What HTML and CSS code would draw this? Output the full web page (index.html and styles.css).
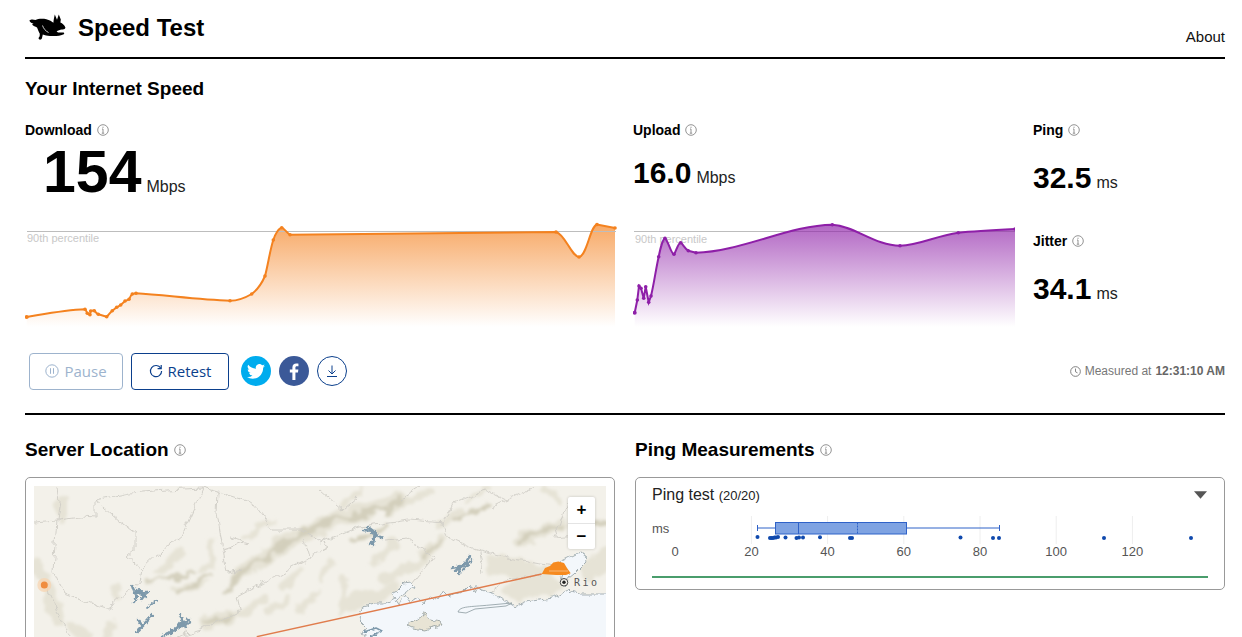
FILE: index.html
```html
<!DOCTYPE html>
<html lang="en">
<head>
<meta charset="utf-8">
<title>Speed Test</title>
<link rel="stylesheet" href="styles.css">
</head>
<body>
<svg class="defs" width="0" height="0" aria-hidden="true">
  <defs>
    <symbol id="info" viewBox="0 0 12 12">
      <circle cx="6" cy="6" r="5.300" fill="none" stroke="#888" stroke-width=".9"/>
      <path d="M6 2.700v1.200M6 5v4.200M5 5h1M4.800 9.200h2.400" fill="none" stroke="#888" stroke-width=".9"/>
    </symbol>
    <linearGradient id="gradOrange" x1="0" y1="0" x2="0" y2="1">
      <stop offset="0" stop-color="#f4811f" stop-opacity=".68"/>
      <stop offset="1" stop-color="#f4811f" stop-opacity="0"/>
    </linearGradient>
    <linearGradient id="gradPurple" x1="0" y1="0" x2="0" y2="1">
      <stop offset="0" stop-color="#8e1fa8" stop-opacity=".68"/>
      <stop offset="1" stop-color="#8e1fa8" stop-opacity="0"/>
    </linearGradient>
    <filter id="terrain" filterUnits="userSpaceOnUse" x="20" y="470" width="600" height="180">
      <feTurbulence type="fractalNoise" baseFrequency=".07" numOctaves="3" seed="4" result="n"/>
      <feDisplacementMap in="SourceGraphic" in2="n" scale="16" xChannelSelector="R" yChannelSelector="G"/>
      <feGaussianBlur stdDeviation="1.500"/>
    </filter>
    <filter id="wiggle" filterUnits="userSpaceOnUse" x="20" y="470" width="600" height="180">
      <feTurbulence type="fractalNoise" baseFrequency=".09" numOctaves="3" seed="9" result="n"/>
      <feDisplacementMap in="SourceGraphic" in2="n" scale="9" xChannelSelector="R" yChannelSelector="G"/>
    </filter>
    <filter id="coast" filterUnits="userSpaceOnUse" x="20" y="470" width="620" height="190">
      <feTurbulence type="fractalNoise" baseFrequency=".14" numOctaves="3" seed="2" result="n"/>
      <feDisplacementMap in="SourceGraphic" in2="n" scale="6" xChannelSelector="R" yChannelSelector="G"/>
    </filter>
    <filter id="jag" filterUnits="userSpaceOnUse" x="20" y="470" width="600" height="180">
      <feTurbulence type="fractalNoise" baseFrequency=".4" numOctaves="2" seed="5" result="n"/>
      <feDisplacementMap in="SourceGraphic" in2="n" scale="4" xChannelSelector="R" yChannelSelector="G"/>
    </filter>
  </defs>
</svg>
<div class="page">
  <header class="top">
    <div class="brand">
      <svg class="rabbit" width="38" height="28" viewBox="29 14 38 28">
        <path fill="#000" d="M29.300 20.600 C30.500 19.200 33 19 35.500 20 C38.500 18.200 46 18 50.500 20.800 L53.400 22.800 C53.600 20 54.200 17 54.800 14.600 L57 19.800 L58.800 14.400 L60.800 19.500 L60.400 22.600 C62.500 23.400 64.500 25.200 65.400 27.500 C65.300 29 63.800 29.800 61.800 29.400 C60 29.800 58 30.500 56.600 31.200 L58 32.600 L63.800 32.400 L64.300 34 C60.500 36 55 36.200 51 36 C48 36.200 45 35.600 42.800 34.600 L42 38 C41.600 40 39 40.200 38.600 38.600 C38.400 37.600 39.400 37.200 39.700 36 L39.800 33.800 C38.800 31.500 37.600 29 37 27.400 C35.200 26.400 33.400 26.200 32 24.400 L33.500 23.800 C32 23.600 30 22.400 29.300 20.600 Z"/>
        <path fill="none" stroke="#fff" stroke-width=".8" d="M42.500 25.500 C43.500 28.500 45.500 31 48.500 32.500"/>
      </svg>
      <h1 class="brand-name">Speed Test</h1>
    </div>
    <a class="about">About</a>
  </header>

  <section class="speed">
    <h2 class="section-title">Your Internet Speed</h2>
    <div class="results">
      <div class="metric-col">
        <div class="label">Download <svg class="info"><use href="#info"/></svg></div>
        <div class="value value-big">154<span class="unit">Mbps</span></div>
        <svg class="chart" width="592" height="115" viewBox="25 215 592 115">
          <path fill="url(#gradOrange)" d="M26.700 317 C45 314 65 310 85 309.300 C86 310 86.500 312 87.300 313.300 C88 314 89 315 90 314.700 C90.300 313 90.300 312 90.700 311 C92 310.500 93 310.300 94.300 310.700 C95.500 312 97 313.800 98.300 314.300 C101 315 104 316 106.700 316.700 C108.500 315 110.500 312 112.300 310.700 L116.700 307.300 L120.700 305 L125 301 L129 299.300 C130 297 131 295 132.300 294 L136 293.300 C165 295 200 300 230 300.700 C238 300.700 245 298 251.700 294 C257 290 262 283 265 276 C268 265 270 250 273.300 240 C275 234 279 228 281.700 227.700 C284 228 287 233 290 234.700 C380 233.500 470 232.500 556 232 C565 234 571 256 579 257 C587 256 590 226 597 224.500 L615 228 V327 H26.700 Z"/>
          <line class="p90" x1="27" y1="231.500" x2="616" y2="231.500"/>
          <text class="p90-text" x="27" y="242">90th percentile</text>
          <path fill="none" stroke="#f4821f" stroke-width="2" d="M26.700 317 C45 314 65 310 85 309.300 C86 310 86.500 312 87.300 313.300 C88 314 89 315 90 314.700 C90.300 313 90.300 312 90.700 311 C92 310.500 93 310.300 94.300 310.700 C95.500 312 97 313.800 98.300 314.300 C101 315 104 316 106.700 316.700 C108.500 315 110.500 312 112.300 310.700 L116.700 307.300 L120.700 305 L125 301 L129 299.300 C130 297 131 295 132.300 294 L136 293.300 C165 295 200 300 230 300.700 C238 300.700 245 298 251.700 294 C257 290 262 283 265 276 C268 265 270 250 273.300 240 C275 234 279 228 281.700 227.700 C284 228 287 233 290 234.700 C380 233.500 470 232.500 556 232 C565 234 571 256 579 257 C587 256 590 226 597 224.500 L615 228"/>
          <g fill="#f4821f">
            <circle cx="26.700" cy="317" r="2"/><circle cx="85" cy="309.300" r="1.800"/><circle cx="87.300" cy="313.300" r="1.800"/><circle cx="90" cy="314.700" r="1.800"/><circle cx="90.700" cy="311" r="1.800"/><circle cx="94.300" cy="310.700" r="1.800"/><circle cx="98.300" cy="314.300" r="1.800"/><circle cx="106.700" cy="316.700" r="1.800"/><circle cx="112.300" cy="310.700" r="1.800"/><circle cx="116.700" cy="307.300" r="1.800"/><circle cx="120.700" cy="305" r="1.800"/><circle cx="125" cy="301" r="1.800"/><circle cx="129" cy="299.300" r="1.800"/><circle cx="132.300" cy="294" r="1.800"/><circle cx="136" cy="293.300" r="1.800"/><circle cx="230" cy="300.700" r="1.800"/><circle cx="251.700" cy="294" r="1.800"/><circle cx="265" cy="276" r="1.800"/><circle cx="273.300" cy="240" r="1.800"/><circle cx="281.700" cy="227.700" r="1.800"/><circle cx="290" cy="234.700" r="1.800"/><circle cx="556" cy="232" r="1.800"/><circle cx="579" cy="257" r="1.800"/><circle cx="597" cy="224.500" r="1.800"/><circle cx="615" cy="228" r="1.800"/>
          </g>
        </svg>
      </div>
      <div class="metric-col">
        <div class="label">Upload <svg class="info"><use href="#info"/></svg></div>
        <div class="value value-mid">16.0<span class="unit">Mbps</span></div>
        <svg class="chart" width="382" height="115" viewBox="633 215 382 115">
          <line class="p90" x1="634" y1="231.500" x2="1015" y2="231.500"/>
          <text class="p90-text" x="635" y="243">90th percentile</text>
          <path fill="url(#gradPurple)" d="M634.700 312.700 L637.300 300 L639 286 L641 288.300 L643.700 298.300 L645.700 286.700 L648.700 302.300 L651 296 C654 284 656 268 658.700 256.700 C660 250 663 238.300 665 238.300 C668 240 671 254.300 674 254.300 C676 252 678 242.700 680.700 242.700 C683 244 685 249 688.300 250.700 L696 252.700 C740 252 790 225 832.300 224.700 C855 226 875 245.700 900 245.700 C920 245 935 236 958.300 232.700 C975 231 995 230 1015 229 V327 H634.700 Z"/>
          <path fill="none" stroke="#8e1fa8" stroke-width="2" d="M634.700 312.700 L637.300 300 L639 286 L641 288.300 L643.700 298.300 L645.700 286.700 L648.700 302.300 L651 296 C654 284 656 268 658.700 256.700 C660 250 663 238.300 665 238.300 C668 240 671 254.300 674 254.300 C676 252 678 242.700 680.700 242.700 C683 244 685 249 688.300 250.700 L696 252.700 C740 252 790 225 832.300 224.700 C855 226 875 245.700 900 245.700 C920 245 935 236 958.300 232.700 C975 231 995 230 1015 229"/>
          <g fill="#8e1fa8">
            <circle cx="634.700" cy="312.700" r="2"/><circle cx="637.300" cy="300" r="1.800"/><circle cx="639" cy="286" r="1.800"/><circle cx="641" cy="288.300" r="1.800"/><circle cx="643.700" cy="298.300" r="1.800"/><circle cx="645.700" cy="286.700" r="1.800"/><circle cx="648.700" cy="302.300" r="1.800"/><circle cx="651" cy="296" r="1.800"/><circle cx="658.700" cy="256.700" r="1.800"/><circle cx="665" cy="238.300" r="1.800"/><circle cx="674" cy="254.300" r="1.800"/><circle cx="680.700" cy="242.700" r="1.800"/><circle cx="688.300" cy="250.700" r="1.800"/><circle cx="696" cy="252.700" r="1.800"/><circle cx="832.300" cy="224.700" r="1.800"/><circle cx="900" cy="245.700" r="1.800"/><circle cx="958.300" cy="232.700" r="1.800"/><circle cx="1015" cy="229" r="1.800"/>
          </g>
        </svg>
      </div>
      <div class="metric-col">
        <div class="label">Ping <svg class="info"><use href="#info"/></svg></div>
        <div class="value value-side">32.5<span class="unit">ms</span></div>
        <div class="label label-jitter">Jitter <svg class="info"><use href="#info"/></svg></div>
        <div class="value value-side">34.1<span class="unit">ms</span></div>
      </div>
    </div>
    <div class="actions">
      <button class="btn btn-off">
        <svg width="14" height="14" viewBox="0 0 14 14"><circle cx="7" cy="7" r="6.200" fill="none" stroke="currentColor"/><path d="M5.500 4.200v5.600M8.500 4.200v5.600" stroke="currentColor"/></svg>
        Pause
      </button>
      <button class="btn btn-on">
        <svg width="14" height="14" viewBox="0 0 14 14"><path d="M11.800 4.200A5.600 5.600 0 1 0 12.600 7" fill="none" stroke="currentColor" stroke-width="1.200"/><path d="M12.200 1v3.600H8.600" fill="none" stroke="currentColor" stroke-width="1.200"/></svg>
        Retest
      </button>
      <div class="circle circle-twitter">
        <svg width="18" height="15" viewBox="0 0 24 20"><path fill="#fff" d="M24 2.400a9.800 9.800 0 0 1-2.800.8A4.900 4.900 0 0 0 23.300.500a9.800 9.800 0 0 1-3.100 1.200 4.900 4.900 0 0 0-8.400 4.500A13.900 13.900 0 0 1 1.700.900a4.900 4.900 0 0 0 1.500 6.600 4.900 4.900 0 0 1-2.200-.6v.1a4.900 4.900 0 0 0 3.900 4.800 4.900 4.900 0 0 1-2.200.1 4.900 4.900 0 0 0 4.600 3.400A9.900 9.900 0 0 1 0 17.300 13.900 13.900 0 0 0 7.500 19.500c9.100 0 14-7.500 14-14v-.6A10 10 0 0 0 24 2.400z"/></svg>
      </div>
      <div class="circle circle-fb">
        <svg width="10" height="17" viewBox="0 0 10 18"><path fill="#fff" d="M6.500 18V10h2.700l.4-3.100H6.500V5c0-.9.300-1.500 1.600-1.500h1.600V.7C9.400.7 8.500.6 7.400.6 5 .6 3.300 2 3.300 4.700v2.200H.6V10h2.700v8z"/></svg>
      </div>
      <div class="circle circle-save">
        <svg width="16" height="16" viewBox="0 0 16 16"><path d="M8 2.500v8.500M4.500 7.500 8 11l3.500-3.500M3 13.500h10" fill="none" stroke="currentColor" stroke-width="1"/></svg>
      </div>
      <div class="measured">
        <svg width="11" height="11" viewBox="0 0 12 12"><circle cx="6" cy="6" r="5.300" fill="none" stroke="#777"/><path d="M6 2.800V6.300l2.200 1.200" fill="none" stroke="#777"/></svg>
        Measured at <b>12:31:10 AM</b>
      </div>
    </div>
  </section>

  <section class="bottom">
    <div class="bottom-col">
      <h2 class="section-title title-info">Server Location <svg class="info"><use href="#info"/></svg></h2>
      <div class="card card-map">
        <div class="map">
          <svg class="map-art" width="572" height="151" viewBox="34 486 572 151">
            <rect x="34" y="486" width="572" height="151" fill="#f3f1ea"/>
            <g filter="url(#terrain)" fill="none" stroke-linecap="round">
              <g stroke="#e6e3d6">
                <path d="M61 498 L61 518" stroke-width="8"/><path d="M34 565 L46 580 L52 605 L58 620" stroke-width="12"/><path d="M72 628 L88 636" stroke-width="12"/><path d="M112 622 L108 636" stroke-width="9"/>
                <path d="M117 586 L117 596" stroke-width="9"/><path d="M160 570 L182 550" stroke-width="9"/><path d="M175 590 L205 583" stroke-width="7"/>
                <path d="M240 573 L285 543 L327 523 L400 500" stroke-width="15"/><path d="M210 540 L212 560" stroke-width="7"/><path d="M200 572 L212 566" stroke-width="7"/>
                <path d="M240 615 L262 602" stroke-width="10"/><path d="M205 622 L232 616" stroke-width="13"/><path d="M270 610 L290 600" stroke-width="8"/>
                <path d="M388 510 L430 492" stroke-width="8"/><path d="M425 555 L440 540" stroke-width="11"/><path d="M385 580 L425 560" stroke-width="11"/><path d="M345 605 L395 590" stroke-width="13"/>
                <path d="M440 525 L462 510" stroke-width="8"/><path d="M465 500 L490 488" stroke-width="6"/><path d="M545 490 L560 500" stroke-width="8"/><path d="M495 565 L540 575" stroke-width="22"/><path d="M510 590 L555 585" stroke-width="18"/><path d="M590 570 L606 560" stroke-width="22"/>
                <path d="M343 505 L360 490" stroke-width="8"/><path d="M280 590 L300 570" stroke-width="7"/><path d="M245 540 L270 520" stroke-width="6"/>
                <path d="M520 540 L560 527" stroke-width="14"/><path d="M340 610 L345 580" stroke-width="8"/><path d="M375 560 L395 545" stroke-width="9"/><path d="M320 580 L330 560" stroke-width="6"/><path d="M300 610 L315 595" stroke-width="7"/>
              </g>
              <g stroke="#d3cfbc">
                <path d="M240 573 L262 560 L285 543 L305 530 L327 523" stroke-width="5"/>
                <path d="M320 527 L345 518 L370 512 L387 510 L400 500" stroke-width="5"/>
                <path d="M147 583 L170 578 L193 573" stroke-width="3"/>
                <path d="M177 593 L195 585 L210 577" stroke-width="4"/>
                <path d="M520 540 L540 532 L560 527" stroke-width="6"/>
                <path d="M453 522 L475 510 L490 503" stroke-width="4"/>
                <path d="M355 540 L390 525" stroke-width="4"/>
                <path d="M225 595 L240 575" stroke-width="4"/>
                <path d="M575 530 L606 522" stroke-width="4"/>
                <path d="M425 555 L440 540" stroke-width="4"/>
                <path d="M205 622 L232 616" stroke-width="4"/>
              </g>
            </g>
            <path filter="url(#coast)" fill="#f3f7fb" stroke="#929fa4" stroke-width=".8" d="M620 594 L580 594 L570 592 L568 590 L553 598 L527 601.700 L515 606.700 L506.700 601.700 L490 591.700 L476.700 586.700 L474 592 L470 585 L463 592 L450 596 L444 590 L438 600 L430 596 L423 605 L418 597 L410 602 L405 595 L400 606 L396 600 L406 592 L414 588 L411 583 L404 584 L398 590 L392 593 L395 598 L384 604 L375 604 L363 606.700 L361 612 L360 620 L367 627 L363 633 L372 650 L620 650 Z"/>
            <path fill="#f3f7fb" stroke="#8c9a9f" stroke-width=".8" d="M458 612 C460 606 470 607 490 605 L512 603 L506 606 L475 609 L466 613 Z"/>
            <path filter="url(#coast)" fill="#e8e4d5" stroke="#8f9a9a" stroke-width=".8" d="M407 625 L418 618 L425 613 L431 620 L441 622 L443 625 L433 628 L424 630 L413 628 Z"/>
            <path filter="url(#coast)" fill="#f3f7fb" stroke="#929fa4" stroke-width=".8" d="M562 572 L560 562 L572 556 L580 552 L585 554 L586 562 L580 568 L574 574 L569 578 L566 586 L560 580 Z"/>
            <g filter="url(#wiggle)" fill="none" stroke="#cfcdc6" stroke-width=".9">
              <path d="M58 486 L60 503 L57 520 L34 522"/>
              <path d="M57 520 L80 517 L95 518 L95 500 L120 522 L135 533 L135 550 L127 557 L142 570 L140 580 L113 603 L110 610 L100 607 L63 593 L53 570 L57 520"/>
              <path d="M95 500 L130 493 L166 490 L203 488 L183 533 L163 550 L142 570"/>
              <path d="M218 492 L217 513 L223 550 L227 573 L240 570"/>
              <path d="M223 550 L247 542 L230 537"/>
              <path d="M203 488 L218 492 L253 503 L273 530 L303 530 L330 547 L237 597 L240 610 L200 630 L177 637"/>
              <path d="M303 537 L310 560"/>
              <path d="M48 585 L57 613 L65 627 L70 637"/>
              <path d="M320 543 L360 527 L410 520 L443 523 L447 537 L477 550 L507 558 L560 566"/>
              <path d="M383 540 L407 538 L433 557 L413 583"/>
              <path d="M443 523 L453 503 L487 490 L507 500"/>
              <path d="M533 487 L493 507"/>
              <path d="M483 573 L480 552"/>
              <path d="M575 535 L553 537 L560 527 L567 503"/>
              <path d="M320 490 L343 510 L358 497"/>
              <path d="M400 500 L420 487"/>
              <path d="M490 591 L505 580 L540 575"/>
            </g>
            <g filter="url(#jag)" fill="none" stroke="#7d99ab" stroke-width="2.400" stroke-linejoin="round" stroke-linecap="round">
              <path d="M132 586 L137 597 L134 602 M134 593 L148 592 M139 590 L146 597 M141 600 L147 592 M136 590 L143 596"/>
              <path d="M147 608 L157 600" stroke-width="1.800"/>
              <path d="M152 615 L137 632 M142 625 L138 620 M147 622 L141 628"/>
              <path d="M189 619 L180 625 L162 637 M180 615 L186 628 M175 630 L190 622 M171 634 L182 621"/>
              <path d="M363 530 L375 531 L373 545 M372 533 L383 538 M375 537 L370 544 M368 527 L376 533"/>
              <path d="M451 568 L463 566 L470 556 M460 566 L459 574 M455 571 L468 562 M463 570 L472 560"/>
              <path d="M364 632 L376 628 L382 631 L370 637" stroke-width="1.600"/>
            </g>
            <line x1="256.700" y1="636.700" x2="541.700" y2="574" stroke="#e07c4c" stroke-width="1.400"/>
            <path fill="#f68a1f" d="M541.700 574 L545 568 L550 566 L553.300 562.500 L558.300 561.500 L564 563 L567 568 L570.700 573.300 L566 575 L556 575 Z"/>
            <path d="M549 571 H568" stroke="#fbc48f" stroke-width=".8"/>
            <circle cx="44.300" cy="585" r="7" fill="#f8d3ae" opacity=".7"/><circle cx="44.300" cy="585" r="3.500" fill="#f08c3e"/>
            <circle cx="564" cy="582.300" r="3.800" fill="#f3f1ea" stroke="#444"/><circle cx="564" cy="582.300" r="1.700" fill="#222"/>
            <text class="rio" x="574" y="586">Rio</text>
          </svg>
          <div class="zoom-ctl"><span class="zoom-btn">+</span><span class="zoom-btn">−</span></div>
        </div>
      </div>
    </div>
    <div class="bottom-col">
      <h2 class="section-title title-info">Ping Measurements <svg class="info"><use href="#info"/></svg></h2>
      <div class="card card-ping">
        <div class="ping-head">
          <span class="ping-name">Ping test <small>(20/20)</small></span>
          <svg width="13" height="8" viewBox="0 0 14 8"><path d="M0 0H14L7 8Z" fill="#555"/></svg>
        </div>
        <svg class="plot" width="556" height="48" viewBox="652 516 556 48">
          <g stroke="#eee"><line x1="751.400" y1="516" x2="751.400" y2="544"/><line x1="827.600" y1="516" x2="827.600" y2="544"/><line x1="903.800" y1="516" x2="903.800" y2="544"/><line x1="980" y1="516" x2="980" y2="544"/><line x1="1056.200" y1="516" x2="1056.200" y2="544"/><line x1="1132.400" y1="516" x2="1132.400" y2="544"/></g>
          <text class="plot-unit" x="652" y="533">ms</text>
          <path d="M757.500 525v6M757.500 528H775M906 528H999.500M999.500 525v6" fill="none" stroke="#2f62c8"/>
          <rect x="775.500" y="522.500" width="131" height="11.500" fill="#7fa3e2" stroke="#2f62c8"/>
          <line x1="798.500" y1="522.500" x2="798.500" y2="534" stroke="#2f62c8"/>
          <line x1="857.500" y1="522.500" x2="857.500" y2="534" stroke="#2f62c8" stroke-dasharray="2 1"/>
          <g fill="#0f49ad">
            <circle cx="757.500" cy="537" r="2"/><circle cx="770" cy="538" r="2"/><circle cx="771.500" cy="538" r="2"/><circle cx="773" cy="538" r="2"/><circle cx="774.500" cy="537.500" r="2"/><circle cx="776" cy="537.500" r="2"/><circle cx="778" cy="537" r="2"/><circle cx="785.500" cy="537.500" r="2"/><circle cx="796.500" cy="538" r="2"/><circle cx="799" cy="537.500" r="2"/><circle cx="803" cy="537.500" r="2"/><circle cx="820" cy="537.300" r="2"/><circle cx="850" cy="538" r="2"/><circle cx="852" cy="538" r="2"/><circle cx="960.500" cy="537.500" r="2"/><circle cx="993" cy="538" r="2"/><circle cx="999" cy="538" r="2"/><circle cx="1104" cy="538" r="2"/><circle cx="1191" cy="538" r="2"/>
          </g>
          <g class="plot-tick"><text x="675" y="556">0</text><text x="751.400" y="556">20</text><text x="827.600" y="556">40</text><text x="903.800" y="556">60</text><text x="980" y="556">80</text><text x="1056.200" y="556">100</text><text x="1132.400" y="556">120</text></g>
        </svg>
        <div class="green-bar"></div>
      </div>
    </div>
  </section>
</div>
</body>
</html>
```

FILE: styles.css
```css
* { box-sizing: border-box; }
html, body { margin: 0; height: 637px; overflow: hidden; background: #fff; }
body { font-family: "Liberation Sans", Arial, sans-serif; color: #000; }
.defs { position: absolute; }
.page { width: 1200px; margin-left: 25px; }

.top { height: 59px; display: flex; justify-content: space-between; border-bottom: 2px solid #000; }
.brand { display: flex; align-items: center; padding: 0 0 0 4px; gap: 11px; height: 56px; }
.rabbit { display: block; }
.brand-name { margin: 0; font-size: 24px; font-weight: 700; line-height: 28px; }
.about { align-self: flex-end; font-size: 15px; line-height: 16px; margin-bottom: 12px; color: #111; }

.speed { height: 356px; border-bottom: 2px solid #000; padding-top: 18px; }
.section-title { margin: 0; font-size: 19px; line-height: 23px; font-weight: 700; }
.results { display: grid; grid-template-columns: 608px 400px 192px; margin-top: 22px; }
.metric-col { display: flex; flex-direction: column; }
.label { font-size: 14px; font-weight: 700; line-height: 16px; display: flex; align-items: center; gap: 5px; }
.info { width: 12px; height: 12px; }
.value { font-weight: 700; white-space: nowrap; }
.unit { font-weight: 400; font-size: 16px; margin-left: 5px; color: #222; }
.value-big { font-size: 59px; line-height: 60px; margin: 4px 0 0 18px; height: 73px; }
.value-mid { font-size: 30px; line-height: 34px; margin-top: 18px; height: 59px; }
.value-side { font-size: 30px; line-height: 34px; margin-top: 23px; height: 34px; }
.label-jitter { margin-top: 38px; }
.chart { display: block; }
.p90 { stroke: #bdbdbd; stroke-width: 1; }
.p90-text { font-size: 11px; fill: #c8c8c8; }

.actions { display: flex; align-items: center; margin-top: 22px; height: 38px; padding-left: 4px; }
.btn { height: 37px; display: flex; align-items: center; justify-content: center; gap: 5px; padding: 0; background: #fff; border: 1px solid #0b3f8c; border-radius: 4px; color: #0b3f8c; font-family: "Open Sans", sans-serif; font-size: 15px; margin-right: 8px; }
.btn-on { width: 98px; }
.btn-off { width: 94px; border-color: #9db3cd; color: #9db3cd; }
.circle { width: 30px; height: 30px; border-radius: 50%; display: flex; align-items: center; justify-content: center; margin-right: 8px; flex: none; }
.circle-twitter { background: #00acee; margin-left: 4px; }
.circle-fb { background: #3b5998; }
.circle-save { border: 1px solid #0b3f8c; color: #0b3f8c; }
.measured { margin-left: auto; font-size: 12px; color: #777; display: flex; align-items: center; gap: 4px; }
.measured b { color: #666; }

.bottom { display: grid; grid-template-columns: 590px 590px; column-gap: 20px; padding-top: 23px; height: 222px; overflow: hidden; }
.title-info { display: flex; align-items: center; gap: 5px; margin-bottom: 16px; }
.card { border: 1px solid #999; border-radius: 5px; background: #fff; }
.card-map { padding: 8px; height: 240px; }
.map { position: relative; height: 224px; overflow: hidden; }
.map-art { display: block; }
.zoom-ctl { position: absolute; top: 11px; right: 11px; width: 27px; background: #fff; border-radius: 2px; box-shadow: 0 0 3px rgba(0,0,0,.2); display: flex; flex-direction: column; }
.zoom-btn { height: 26px; display: flex; align-items: center; justify-content: center; font-size: 17px; font-weight: 700; }
.zoom-btn + .zoom-btn { border-top: 1px solid #e4e4e4; }
.rio { font-family: "DejaVu Sans Mono", monospace; font-size: 10px; letter-spacing: 2.5px; fill: #555; }

.card-ping { height: 113px; padding: 8px 16px 0; }
.ping-head { display: flex; justify-content: space-between; align-items: center; height: 18px; padding-right: 1px; }
.ping-name { font-size: 16px; color: #222; }
.ping-name small { font-size: 13px; }
.plot { display: block; margin-top: 12px; }
.plot-unit { font-size: 13px; fill: #555; }
.plot-tick text { font-size: 13px; fill: #555; text-anchor: middle; }
.green-bar { height: 2px; background: #4a9d6c; margin-top: 12px; }
```
